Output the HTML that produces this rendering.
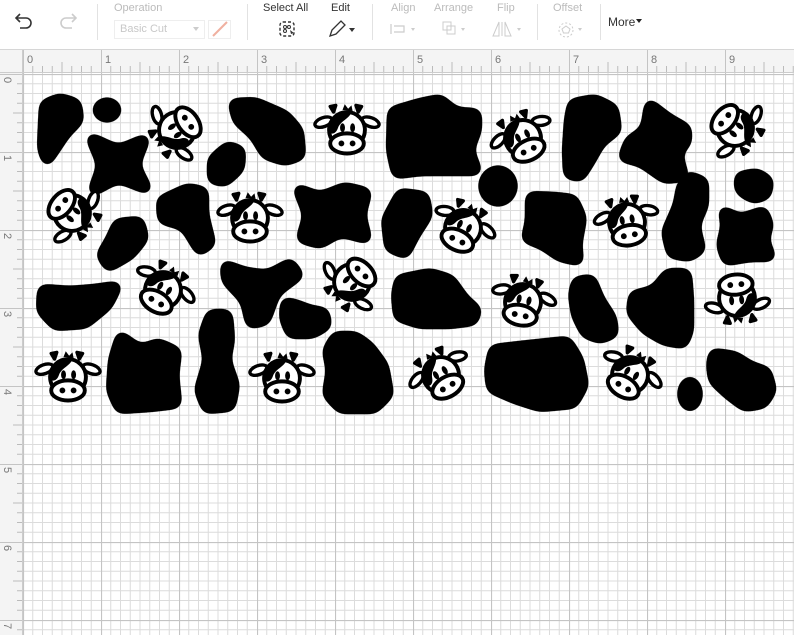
<!DOCTYPE html>
<html><head><meta charset="utf-8"><style>
html,body{margin:0;padding:0;width:794px;height:635px;overflow:hidden;background:#fff;font-family:"Liberation Sans",sans-serif}
.tb{position:absolute;left:0;top:0;width:794px;height:49px;background:#fff;border-bottom:1px solid #d6d6d6}
.l{position:absolute;font-size:11px;color:#bbb;top:2px}
.d{color:#333}
.sep{position:absolute;top:4px;width:1px;height:36px;background:#e2e2e2}
.b > *{filter:url(#goo)}
</style></head><body>
<div class="tb">
<svg width="794" height="49" style="position:absolute;left:0;top:0">
<path d="M20 20 l-4 4 4 4 M16 24 h10 a5 5 0 0 1 0 10 h-6" fill="none" stroke="#333" stroke-width="1.6" transform="translate(0,-6)"/>
<path d="M72 20 l4 4 -4 4 M76 24 h-10 a5 5 0 0 0 0 10 h6" fill="none" stroke="#ccc" stroke-width="1.6" transform="translate(0,-6)"/>
<rect x="114.5" y="20.5" width="90" height="18" fill="#fff" stroke="#eee"/>
<path d="M193 27 l3 4 3-4z" fill="#ccc"/>
<rect x="208.5" y="20.5" width="22" height="18" fill="#fff" stroke="#eee"/>
<path d="M213 36 L227 22" stroke="#f0b0a0" stroke-width="2"/>
<rect x="280" y="22" width="14" height="14" rx="3" fill="none" stroke="#333" stroke-width="1.4" stroke-dasharray="3 2"/>
<circle cx="285" cy="27" r="1.5" fill="none" stroke="#333"/><circle cx="289" cy="27" r="1.5" fill="none" stroke="#333"/><circle cx="285" cy="31" r="1.5" fill="none" stroke="#333"/>
<path d="M290 30 l4 3 -3 1z" fill="#333"/>
<path d="M330 36 l2-6 9-9 4 4 -9 9z" fill="none" stroke="#333" stroke-width="1.3"/>
<path d="M349 28 l3 4 3-4z" fill="#333"/>
<path d="M391 24 v10 M394 26 h10 v6 h-10" fill="none" stroke="#ccc" stroke-width="1.2"/><path d="M411 28 l2 3 2-3z" fill="#ccc"/>
<rect x="443" y="22" width="8" height="8" fill="none" stroke="#ccc"/><rect x="447" y="26" width="8" height="8" fill="none" stroke="#ccc"/><path d="M461 28 l2 3 2-3z" fill="#ccc"/>
<path d="M502 22 v14 M499 22 l-6 14 h6z M505 22 l6 14 h-6z" fill="none" stroke="#ccc"/><path d="M517 28 l2 3 2-3z" fill="#ccc"/>
<circle cx="566" cy="30" r="7" fill="none" stroke="#ccc" stroke-dasharray="2 2"/><path d="M566 26 l4 3 -1.5 4 h-5 l-1.5-4z" fill="none" stroke="#ccc"/><path d="M578 28 l2 3 2-3z" fill="#ccc"/>
<path d="M636 19 l3 4 3-4z" fill="#222"/>
</svg>
<div class="l" style="left:114px">Operation</div>
<div class="l" style="left:120px;top:23px;color:#c8c8c8">Basic Cut</div>
<div class="sep" style="left:97px"></div>
<div class="sep" style="left:247px"></div>
<div class="l d" style="left:263px">Select All</div>
<div class="l d" style="left:331px">Edit</div>
<div class="sep" style="left:372px"></div>
<div class="l" style="left:391px">Align</div>
<div class="l" style="left:434px">Arrange</div>
<div class="l" style="left:497px">Flip</div>
<div class="sep" style="left:537px"></div>
<div class="l" style="left:553px">Offset</div>
<div class="sep" style="left:600px"></div>
<div class="l d" style="left:608px;top:15px;font-size:12px">More</div>
</div>
<svg width="794" height="585" style="position:absolute;left:0;top:50px" viewBox="0 50 794 585">
<defs>
<filter id="goo" x="-30%" y="-30%" width="160%" height="160%">
<feGaussianBlur in="SourceAlpha" stdDeviation="5"/>
<feColorMatrix type="matrix" values="0 0 0 0 0  0 0 0 0 0  0 0 0 0 0  0 0 0 20 -9"/>
</filter>
<pattern id="g" x="23" y="74" width="78" height="78" patternUnits="userSpaceOnUse">
<path d="M9.75 0V78M19.5 0V78M29.25 0V78M39 0V78M48.75 0V78M58.5 0V78M68.25 0V78M0 9.75H78M0 19.5H78M0 29.25H78M0 39H78M0 48.75H78M0 58.5H78M0 68.25H78" stroke="#dcdcdc" stroke-width="1"/>
<path d="M0.5 0V78M0 0.5H78" stroke="#c4c4c4" stroke-width="1.2"/>
</pattern>
<pattern id="tt" x="23" y="0" width="78" height="78" patternUnits="userSpaceOnUse">
<path d="M9.75 66V72M19.5 66V72M29.25 66V72M39 62V72M48.75 66V72M58.5 66V72M68.25 66V72" stroke="#bbb"/>
<path d="M0.5 50V72" stroke="#c4c4c4"/>
</pattern>
<pattern id="lt" x="0" y="74" width="78" height="78" patternUnits="userSpaceOnUse">
<path d="M17 9.75H23M17 19.5H23M17 29.25H23M13 39H23M17 48.75H23M17 58.5H23M17 68.25H23" stroke="#bbb"/>
<path d="M0 0.5H23" stroke="#c4c4c4"/>
</pattern>
<g id="cow" transform="scale(1.12)">
<path d="M-12,-16 l-3,-5 5,-1z M10,-16 l3,-5 -5,-1z" fill="#000" stroke="#000" stroke-width="3" stroke-linejoin="round"/>
<ellipse cx="-21" cy="-7" rx="8" ry="4" transform="rotate(-20 -21 -7)" fill="#fff" stroke="#000" stroke-width="3"/>
<ellipse cx="21" cy="-7" rx="8" ry="4" transform="rotate(20 21 -7)" fill="#fff" stroke="#000" stroke-width="3"/>
<circle r="16" fill="#fff" stroke="#000" stroke-width="3.5"/>
<path d="M-16,-2 C-16,-14 -6,-17 4,-16 C2,-10 -6,-8 -8,-2 C-10,4 -14,4 -16,2z" fill="#000"/>
<path d="M-4,-18 l2,-5 3,4 3,-3 1,5z" fill="#000"/>
<ellipse cx="-4" cy="-2" rx="2.2" ry="4" fill="#000"/>
<ellipse cx="5" cy="-2" rx="2.2" ry="4" fill="#000"/>
<ellipse cx="0" cy="12" rx="15" ry="9" fill="#fff" stroke="#000" stroke-width="3.5"/>
<circle cx="-5" cy="12" r="2.6" fill="#000"/><circle cx="5" cy="12" r="2.6" fill="#000"/>
</g>
</defs>
<rect x="0" y="50" width="794" height="585" fill="#fff"/>
<rect x="23" y="72" width="771" height="563" fill="url(#g)"/>
<rect x="23" y="50" width="771" height="22" fill="#f4f4f4"/>
<rect x="23" y="50" width="771" height="22" fill="url(#tt)"/>
<rect x="0" y="50" width="23" height="585" fill="#f4f4f4"/>
<rect x="0" y="72" width="23" height="563" fill="url(#lt)"/>
<line x1="0" y1="72.5" x2="794" y2="72.5" stroke="#ccc"/>
<line x1="22.5" y1="50" x2="22.5" y2="635" stroke="#ccc"/>
<g font-size="11" fill="#777">
<text x="27" y="63">0</text><text x="105" y="63">1</text><text x="183" y="63">2</text><text x="261" y="63">3</text><text x="339" y="63">4</text><text x="417" y="63">5</text><text x="495" y="63">6</text><text x="573" y="63">7</text><text x="651" y="63">8</text><text x="729" y="63">9</text>
<g transform="rotate(90)">
<text x="77" y="-4">0</text><text x="155" y="-4">1</text><text x="233" y="-4">2</text><text x="311" y="-4">3</text><text x="389" y="-4">4</text><text x="467" y="-4">5</text><text x="545" y="-4">6</text><text x="623" y="-4">7</text>
</g></g>
<g class="b" fill="#000" stroke="#000" stroke-width="12" stroke-linejoin="round">
<polygon points="45,105 60,99 76,104 78,120 65,133 55,148 47,160 43,148 44,125"/>
<polygon points="92,139 118,151 144,140 134,165 146,188 118,177 94,190 103,165"/>
<polygon points="234,104 255,103 285,116 298,131 300,155 285,160 266,154 255,135 238,120"/>
<polygon points="213,160 228,147 240,151 239,168 225,181 213,179"/>
<polygon points="393,112 420,104 440,100 455,113 476,114 476,130 468,150 476,170 450,170 420,170 397,173 392,150"/>
<polygon points="162,201 188,189 203,192 203,215 210,243 200,250 185,225 163,219"/>
<polygon points="299,190 320,198 345,188 366,193 360,215 366,238 340,231 320,243 302,238 309,215"/>
<polygon points="139,222 143,238 130,254 109,266 102,255 111,240 118,224"/>
<polygon points="401,194 424,197 427,215 414,235 405,253 390,247 387,220"/>
<polygon points="43,290 70,292 95,290 116,287 107,305 85,323 56,325 42,310"/>
<polygon points="226,266 245,273 268,276 290,264 298,275 275,292 265,320 251,323 246,300 227,280"/>
<polygon points="286,303 298,306 310,311 324,313 326,325 312,333 291,333 285,318"/>
<polygon points="211,315 227,315 229,340 225,360 234,385 230,406 207,408 200,390 209,360 204,335"/>
<polygon points="121,337 140,351 158,344 176,352 173,375 176,403 150,406 120,408 112,390 114,360"/>
<polygon points="336,337 355,337 369,347 383,366 388,394 374,408 341,408 328,394 332,370 328,351"/>
<polygon points="573,104 595,100 613,109 616,130 600,142 590,160 580,176 569,174 568,150 570,120"/>
<polygon points="650,105 668,119 686,129 686,142 676,152 683,176 665,178 641,161 624,157 630,141 646,131"/>
<polygon points="531,197 555,198 573,200 581,218 576,245 578,260 560,256 543,244 527,238 531,222"/>
<polygon points="689,177 703,182 703,205 694,225 700,249 689,256 672,253 667,232 679,205 682,187"/>
<polygon points="740,177 757,174 768,181 766,194 755,198 746,194 740,189"/>
<polygon points="724,212 740,220 763,212 768,225 763,240 770,256 750,256 727,260 722,245 727,225"/>
<polygon points="400,280 430,274 450,280 464,300 476,310 473,320 450,323 420,323 399,316 397,295"/>
<polygon points="577,282 591,280 599,300 611,318 613,333 600,338 586,333 577,315 574,295"/>
<polygon points="668,274 686,274 688,300 688,330 683,343 665,340 646,329 632,312 634,296 655,291"/>
<polygon points="494,350 520,347 548,344 567,342 578,360 583,385 573,403 540,406 515,398 492,388 490,370"/>
<polygon points="714,354 735,357 750,367 766,372 771,390 763,403 745,406 729,394 714,380 712,365"/>
<ellipse cx="107" cy="110" rx="15" ry="13" stroke="none"/>
<ellipse cx="498" cy="186" rx="20" ry="21" stroke="none"/>
<ellipse cx="690" cy="394" rx="13" ry="18" stroke="none"/>
</g>
<use href="#cow" transform="translate(177,130) rotate(-125)"/>
<use href="#cow" transform="translate(347,130)"/>
<use href="#cow" transform="translate(72,213) rotate(130)"/>
<use href="#cow" transform="translate(250,218)"/>
<use href="#cow" transform="translate(163,290) rotate(30)"/>
<use href="#cow" transform="translate(352,282) rotate(-135)"/>
<use href="#cow" transform="translate(68,377)"/>
<use href="#cow" transform="translate(282,378)"/>
<use href="#cow" transform="translate(523,138) rotate(-25)"/>
<use href="#cow" transform="translate(735,128) rotate(130)"/>
<use href="#cow" transform="translate(463,228) rotate(25)"/>
<use href="#cow" transform="translate(627,222) rotate(-10)"/>
<use href="#cow" transform="translate(523,302) rotate(12)"/>
<use href="#cow" transform="translate(737,298) rotate(175)"/>
<use href="#cow" transform="translate(441,375) rotate(-30)"/>
<use href="#cow" transform="translate(630,375) rotate(30)"/>
</svg>
</body></html>
